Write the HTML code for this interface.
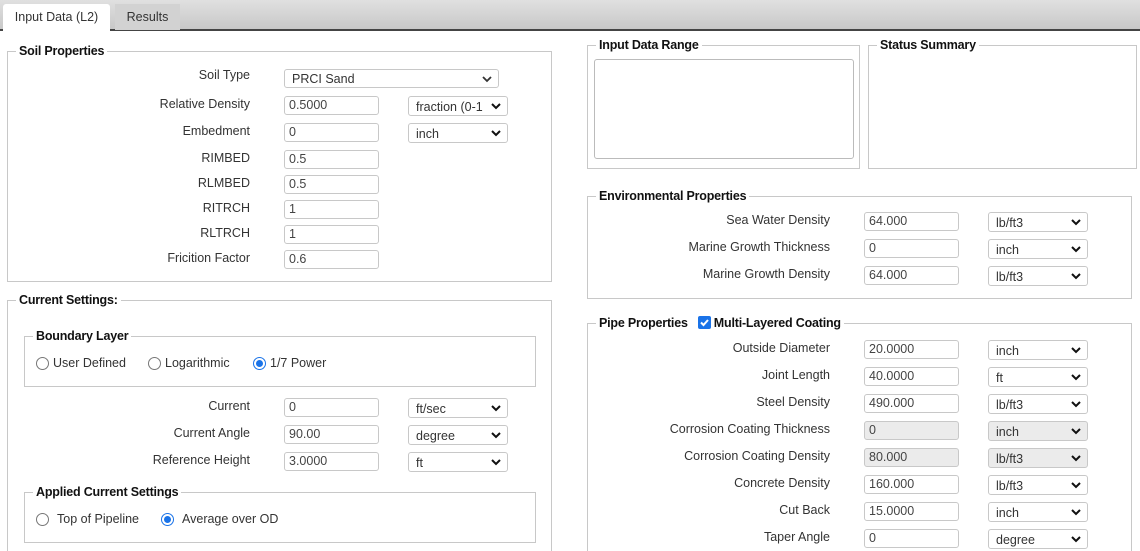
<!DOCTYPE html>
<html style="width:1140px;height:551px;overflow:hidden"><head><meta charset="utf-8"><style>
*{box-sizing:border-box;margin:0;padding:0}
body{width:1140px;height:551px;overflow:hidden;background:#fff;font-family:"Liberation Sans",sans-serif;font-size:12.5px;color:#333;position:relative}
.a{position:absolute}
.fs{position:absolute;border:1px solid #c8c8c8}
.lg{position:absolute;top:-8px;left:8px;background:#fff;padding:0 3px;color:#111;font-size:12.5px;line-height:15px;font-weight:bold;letter-spacing:-0.2px}
.lb{position:absolute;text-align:right;line-height:15px;white-space:nowrap}
.in{position:absolute;width:95px;height:19px;border:1px solid #c8c8c8;border-radius:3px;padding-left:4px;line-height:17px;color:#444}
.sl{position:absolute;width:100px;height:20px;border:1px solid #c8c8c8;border-radius:3px;padding-left:7px;line-height:20px;color:#333}
.sl svg{position:absolute;right:6px;top:6px}
.dis{background:#ebebeb}
.rd{position:absolute;width:13px;height:13px;border:1px solid #777;border-radius:50%;background:#fff}
.rd.on{border:1px solid #1a73e8}
.rd.on::after{content:"";position:absolute;left:2px;top:2px;width:7px;height:7px;border-radius:50%;background:#1a73e8}
</style></head><body>
<div class="a" style="left:0;top:0;width:1140px;height:31px;background:linear-gradient(#e0e0e0,#c8c8c8);border-bottom:2px solid #444"></div>
<div class="a" style="left:3px;top:4px;width:107px;height:28px;background:#fff;border-radius:3px 3px 0 0;text-align:center;line-height:26px">Input Data (L2)</div>
<div class="a" style="left:115px;top:4px;width:65px;height:26px;background:#d2d2d2;text-align:center;line-height:26px">Results</div>

<div class="fs" style="left:7px;top:51px;width:545px;height:231px"><span class="lg">Soil Properties</span></div>
<div class="lb" style="right:890px;top:68px">Soil Type</div>
<div class="sl" style="left:284px;top:69px;width:215px;height:19px;line-height:18px">PRCI Sand<svg width="10" height="7"><path d="M1 1l4 4 4-4" stroke="#333" stroke-width="1.8" fill="none"/></svg></div>
<div class="lb" style="right:890px;top:97px">Relative Density</div>
<div class="in" style="left:284px;top:96px">0.5000</div>
<div class="sl" style="left:408px;top:96px">fraction (0-1<svg width="10" height="7"><path d="M1 1l4 4 4-4" stroke="#111" stroke-width="2" fill="none"/></svg></div>
<div class="lb" style="right:890px;top:124px">Embedment</div>
<div class="in" style="left:284px;top:123px">0</div>
<div class="sl" style="left:408px;top:123px">inch<svg width="10" height="7"><path d="M1 1l4 4 4-4" stroke="#111" stroke-width="2" fill="none"/></svg></div>
<div class="lb" style="right:890px;top:151px">RIMBED</div>
<div class="in" style="left:284px;top:150px">0.5</div>
<div class="lb" style="right:890px;top:176px">RLMBED</div>
<div class="in" style="left:284px;top:175px">0.5</div>
<div class="lb" style="right:890px;top:201px">RITRCH</div>
<div class="in" style="left:284px;top:200px">1</div>
<div class="lb" style="right:890px;top:226px">RLTRCH</div>
<div class="in" style="left:284px;top:225px">1</div>
<div class="lb" style="right:890px;top:251px">Fricition Factor</div>
<div class="in" style="left:284px;top:250px">0.6</div>

<div class="fs" style="left:7px;top:300px;width:545px;height:260px"><span class="lg">Current Settings:</span></div>
<div class="fs" style="left:24px;top:336px;width:512px;height:51px"><span class="lg">Boundary Layer</span></div>
<div class="rd" style="left:36px;top:357px"></div><div class="a" style="left:53px;top:356px">User Defined</div>
<div class="rd" style="left:148px;top:357px"></div><div class="a" style="left:165px;top:356px">Logarithmic</div>
<div class="rd on" style="left:253px;top:357px"></div><div class="a" style="left:270px;top:356px">1/7 Power</div>
<div class="lb" style="right:890px;top:399px">Current</div>
<div class="in" style="left:284px;top:398px">0</div>
<div class="sl" style="left:408px;top:398px">ft/sec<svg width="10" height="7"><path d="M1 1l4 4 4-4" stroke="#111" stroke-width="2" fill="none"/></svg></div>
<div class="lb" style="right:890px;top:426px">Current Angle</div>
<div class="in" style="left:284px;top:425px">90.00</div>
<div class="sl" style="left:408px;top:425px">degree<svg width="10" height="7"><path d="M1 1l4 4 4-4" stroke="#111" stroke-width="2" fill="none"/></svg></div>
<div class="lb" style="right:890px;top:453px">Reference Height</div>
<div class="in" style="left:284px;top:452px">3.0000</div>
<div class="sl" style="left:408px;top:452px">ft<svg width="10" height="7"><path d="M1 1l4 4 4-4" stroke="#111" stroke-width="2" fill="none"/></svg></div>
<div class="fs" style="left:24px;top:492px;width:512px;height:51px"><span class="lg">Applied Current Settings</span></div>
<div class="rd" style="left:36px;top:513px"></div><div class="a" style="left:57px;top:512px">Top of Pipeline</div>
<div class="rd on" style="left:161px;top:513px"></div><div class="a" style="left:182px;top:512px">Average over OD</div>

<div class="fs" style="left:587px;top:45px;width:273px;height:124px"><span class="lg">Input Data Range</span></div>
<div class="a" style="left:594px;top:59px;width:260px;height:100px;border:1px solid #bbb;border-radius:3px"></div>
<div class="fs" style="left:868px;top:45px;width:269px;height:124px"><span class="lg">Status Summary</span></div>

<div class="fs" style="left:587px;top:196px;width:545px;height:103px"><span class="lg">Environmental Properties</span></div>
<div class="lb" style="right:310px;top:213px">Sea Water Density</div>
<div class="in" style="left:864px;top:212px">64.000</div>
<div class="sl" style="left:988px;top:212px">lb/ft3<svg width="10" height="7"><path d="M1 1l4 4 4-4" stroke="#111" stroke-width="2" fill="none"/></svg></div>
<div class="lb" style="right:310px;top:240px">Marine Growth Thickness</div>
<div class="in" style="left:864px;top:239px">0</div>
<div class="sl" style="left:988px;top:239px">inch<svg width="10" height="7"><path d="M1 1l4 4 4-4" stroke="#111" stroke-width="2" fill="none"/></svg></div>
<div class="lb" style="right:310px;top:267px">Marine Growth Density</div>
<div class="in" style="left:864px;top:266px">64.000</div>
<div class="sl" style="left:988px;top:266px">lb/ft3<svg width="10" height="7"><path d="M1 1l4 4 4-4" stroke="#111" stroke-width="2" fill="none"/></svg></div>

<div class="fs" style="left:587px;top:323px;width:545px;height:240px"><span class="lg">Pipe Properties &nbsp;&nbsp;<span style="display:inline-block;width:13px;height:13px;background:#1a73e8;border-radius:2px;vertical-align:-2px;position:relative"><svg width="13" height="13" style="position:absolute;left:0;top:0"><path d="M3 6.5l2.5 2.5 4.5-5" stroke="#fff" stroke-width="2" fill="none"/></svg></span> Multi-Layered Coating</span></div>
<div class="lb" style="right:310px;top:341px">Outside Diameter</div>
<div class="in" style="left:864px;top:340px">20.0000</div>
<div class="sl" style="left:988px;top:340px">inch<svg width="10" height="7"><path d="M1 1l4 4 4-4" stroke="#111" stroke-width="2" fill="none"/></svg></div>
<div class="lb" style="right:310px;top:368px">Joint Length</div>
<div class="in" style="left:864px;top:367px">40.0000</div>
<div class="sl" style="left:988px;top:367px">ft<svg width="10" height="7"><path d="M1 1l4 4 4-4" stroke="#111" stroke-width="2" fill="none"/></svg></div>
<div class="lb" style="right:310px;top:395px">Steel Density</div>
<div class="in" style="left:864px;top:394px">490.000</div>
<div class="sl" style="left:988px;top:394px">lb/ft3<svg width="10" height="7"><path d="M1 1l4 4 4-4" stroke="#111" stroke-width="2" fill="none"/></svg></div>
<div class="lb" style="right:310px;top:422px">Corrosion Coating Thickness</div>
<div class="in dis" style="left:864px;top:421px">0</div>
<div class="sl dis" style="left:988px;top:421px">inch<svg width="10" height="7"><path d="M1 1l4 4 4-4" stroke="#111" stroke-width="2" fill="none"/></svg></div>
<div class="lb" style="right:310px;top:449px">Corrosion Coating Density</div>
<div class="in dis" style="left:864px;top:448px">80.000</div>
<div class="sl dis" style="left:988px;top:448px">lb/ft3<svg width="10" height="7"><path d="M1 1l4 4 4-4" stroke="#111" stroke-width="2" fill="none"/></svg></div>
<div class="lb" style="right:310px;top:476px">Concrete Density</div>
<div class="in" style="left:864px;top:475px">160.000</div>
<div class="sl" style="left:988px;top:475px">lb/ft3<svg width="10" height="7"><path d="M1 1l4 4 4-4" stroke="#111" stroke-width="2" fill="none"/></svg></div>
<div class="lb" style="right:310px;top:503px">Cut Back</div>
<div class="in" style="left:864px;top:502px">15.0000</div>
<div class="sl" style="left:988px;top:502px">inch<svg width="10" height="7"><path d="M1 1l4 4 4-4" stroke="#111" stroke-width="2" fill="none"/></svg></div>
<div class="lb" style="right:310px;top:530px">Taper Angle</div>
<div class="in" style="left:864px;top:529px">0</div>
<div class="sl" style="left:988px;top:529px">degree<svg width="10" height="7"><path d="M1 1l4 4 4-4" stroke="#111" stroke-width="2" fill="none"/></svg></div>
</body></html>
